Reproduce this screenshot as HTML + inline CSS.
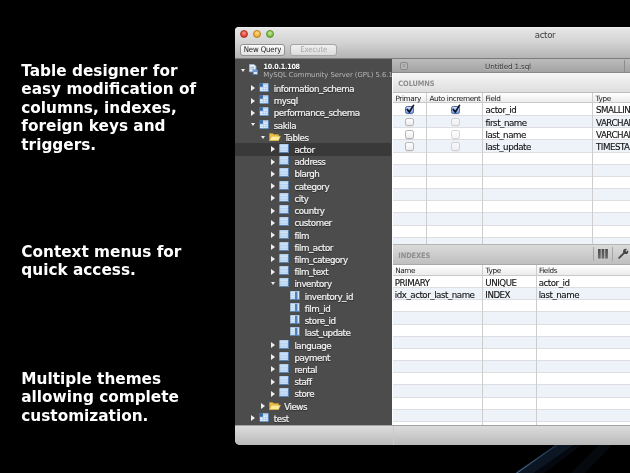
<!DOCTYPE html>
<html>
<head>
<meta charset="utf-8">
<title>Table designer</title>
<style>
html,body{margin:0;padding:0;}
body{width:630px;height:473px;background:#000;position:relative;overflow:hidden;font-family:"DejaVu Sans Condensed","DejaVu Sans","Liberation Sans",sans-serif;}
.abs{position:absolute;}
.promo{position:absolute;left:21.3px;color:#fff;font-family:"DejaVu Sans","Liberation Sans",sans-serif;font-weight:bold;font-size:15.3px;line-height:18.4px;letter-spacing:0;white-space:nowrap;filter:blur(0.3px);}
#glow{position:absolute;left:0;top:0;width:630px;height:473px;}
#win{position:absolute;left:235px;top:26.8px;width:420px;height:418.2px;border-radius:4px 4px 5px 5px;overflow:hidden;background:#fff;filter:blur(0.3px);}
#titlebar{filter:brightness(1.001);position:absolute;z-index:3;left:0;top:0;width:100%;height:32.6px;background:linear-gradient(#f4f4f4 0,#e6e6e6 4%,#d3d3d3 50%,#b4b4b4 100%);border-bottom:1px solid #7c7c7c;box-sizing:border-box;}
.light{position:absolute;top:3px;width:8px;height:8px;border-radius:50%;box-sizing:border-box;}
#title{position:absolute;left:0;width:620px;top:2.2px;text-align:center;font-family:"DejaVu Sans","Liberation Sans",sans-serif;font-size:8.6px;color:#3a3a3a;line-height:12px;letter-spacing:-0.3px;}
.btn{position:absolute;top:17.4px;height:11.6px;border:1px solid #919191;border-radius:3px;box-sizing:border-box;background:linear-gradient(#fdfdfd,#e2e2e2);font-size:7.8px;line-height:9.6px;text-align:center;color:#222;letter-spacing:-0.15px;}
#side{filter:brightness(1.001);position:absolute;left:0;top:32px;width:157px;height:366px;background:#4c4c4c;color:#fff;overflow:hidden;}
.row{position:absolute;left:0;width:156px;height:12.22px;font-family:"DejaVu Sans","Liberation Sans",sans-serif;font-size:8.7px;line-height:12.2px;letter-spacing:-0.45px;white-space:nowrap;text-shadow:0 1px 1px rgba(0,0,0,.55);-webkit-text-stroke:0.22px #f2f2f2;color:#f2f2f2;}
.row .t{position:absolute;top:0.6px;}
.arr{position:absolute;width:0;height:0;}
.ar{border-left:4.4px solid #efefef;border-top:3px solid transparent;border-bottom:3px solid transparent;top:3.1px;}
.ad{border-top:3.9px solid #efefef;border-left:2.8px solid transparent;border-right:2.8px solid transparent;top:4.4px;}
.ico{position:absolute;top:1px;}
#main{position:absolute;left:157px;top:32px;width:264px;height:366px;background:#fff;overflow:hidden;}
#status{position:absolute;left:0;top:398.5px;width:100%;height:19.7px;background:linear-gradient(#dcdcdc,#bababa);border-top:1px solid #a2a2a2;box-sizing:border-box;}
.hdr{position:absolute;left:2px;width:262px;font-size:7.4px;font-weight:bold;color:#8e8e8e;letter-spacing:-0.1px;}
.th{position:absolute;font-family:"DejaVu Sans","Liberation Sans",sans-serif;font-size:7.3px;line-height:10px;color:#222;letter-spacing:-0.38px;white-space:nowrap;}
.td{-webkit-text-stroke:0.12px #111;position:absolute;font-family:"DejaVu Sans","Liberation Sans",sans-serif;font-size:8.7px;line-height:12px;color:#111;letter-spacing:-0.48px;white-space:nowrap;}
.gr{position:absolute;left:1.4px;width:263px;}
.gl{position:absolute;left:1.4px;width:263px;height:0.95px;background:#dedee2;}
.vl{position:absolute;width:1px;background:#cdcdcd;}
.cb{position:absolute;width:8.6px;height:8.6px;border:1px solid #b4b4b4;border-radius:2.2px;background:linear-gradient(#ffffff,#ececec);box-sizing:border-box;box-shadow:0 0.5px 0.5px rgba(0,0,0,.12);}
.cb.on{border-color:#4f6a98;background:linear-gradient(#cfe0f9,#6f9be3);}
</style>
</head>
<body>
<svg id="glow" viewBox="0 0 630 473" style="filter:blur(0.5px)">
  <defs>
    <linearGradient id="g1" x1="0" y1="0" x2="0" y2="1"><stop offset="0" stop-color="#1c2f45"/><stop offset="1" stop-color="#45658a"/></linearGradient>
  </defs>
  <polygon points="556,445 574,445 534,473 516,473" fill="#0c1623"/>
  <polygon points="574,445 582,445 544,473 534,473" fill="#05090f"/>
  <path d="M556.6 445L516.6 473" stroke="url(#g1)" stroke-width="1.3" fill="none"/>
  <polygon points="599,445 612,445 585,473 571,473" fill="#05080d"/>
</svg>

<div class="promo" style="top:62px;">Table designer for<br>easy modification of<br>columns, indexes,<br>foreign keys and<br>triggers.</div>
<div class="promo" style="top:243px;">Context menus for<br>quick access.</div>
<div class="promo" style="top:370px;">Multiple themes<br>allowing complete<br>customization.</div>

<div id="win">
  <div id="titlebar">
    <div class="light" style="left:5px;background:radial-gradient(circle at 50% 35%,#ff9a8e,#e0443a 60%,#b52b23);border:1px solid #a8332c;"></div>
    <div class="light" style="left:18px;background:radial-gradient(circle at 50% 35%,#ffe08a,#f2b13a 60%,#c98a1e);border:1px solid #b78324;"></div>
    <div class="light" style="left:31px;background:radial-gradient(circle at 50% 35%,#c9ef9c,#7fc04a 60%,#55982a);border:1px solid #5c9233;"></div>
    <div id="title">actor</div>
    <div class="btn" style="left:5px;width:45px;">New Query</div>
    <div class="btn" style="left:55.4px;width:46.6px;color:#a8a8a8;border-color:#a5a5a5;background:linear-gradient(#f0f0f0,#dcdcdc);">Execute</div>
  </div>
  <div id="side">
    <div class="arr ad" style="left:5.7px;top:9.8px"></div>
    <svg class="abs" style="left:13.8px;top:5.6px" width="9.2" height="11" viewBox="0 0 10 12"><path d="M0.5 0.5h5l2 2v6h-7z" fill="#eef4fb" stroke="#9db6d6"/><rect x="1.5" y="3" width="4" height="1" fill="#7fa4d8"/><rect x="1.5" y="5" width="4" height="1" fill="#7fa4d8"/><rect x="4.5" y="6.5" width="5" height="5" fill="#dce9f9" stroke="#4f7fc0"/><rect x="5" y="7" width="4" height="1.6" fill="#5b8fd8"/></svg>
    <div class="t abs" style="left:28.5px;top:3.2px;font-size:7.1px;font-weight:bold;line-height:10px;color:#fff;letter-spacing:-0.2px;text-shadow:0 1px 1px rgba(0,0,0,.5);white-space:nowrap">10.0.1.108</div>
    <div class="t abs" style="left:28.3px;top:11.6px;font-family:&quot;DejaVu Sans&quot;,sans-serif;font-size:6.9px;line-height:10px;color:#b9b9b9;letter-spacing:-0.05px;white-space:nowrap">MySQL Community Server (GPL) 5.6.19</div>
    <div class="row" style="top:23.50px"><div class="arr ar" style="left:16.0px"></div><svg class="ico" style="left:24.0px;top:0.6px" width="10" height="9" viewBox="0 0 10 9"><rect x="0.8" y="0.4" width="8.6" height="8.2" fill="#e4f0fb"/><path d="M9.4 0.6v8.1h-8.4" stroke="#4f82bd" stroke-width=".9" fill="none"/><rect x="0.6" y="0.2" width="3.4" height="3.6" fill="#3567a8"/><rect x="4.4" y="0.9" width="4.4" height="1.6" fill="#b5d3f2"/><path d="M4.3 1v7.5M6.8 3v5.5M1 4.6h8M1 6.6h8" stroke="#a4c8ee" stroke-width=".7" fill="none"/></svg><span class="t" style="left:38.8px">information_schema</span></div>
    <div class="row" style="top:35.72px"><div class="arr ar" style="left:16.0px"></div><svg class="ico" style="left:24.0px;top:0.6px" width="10" height="9" viewBox="0 0 10 9"><rect x="0.8" y="0.4" width="8.6" height="8.2" fill="#e4f0fb"/><path d="M9.4 0.6v8.1h-8.4" stroke="#4f82bd" stroke-width=".9" fill="none"/><rect x="0.6" y="0.2" width="3.4" height="3.6" fill="#3567a8"/><rect x="4.4" y="0.9" width="4.4" height="1.6" fill="#b5d3f2"/><path d="M4.3 1v7.5M6.8 3v5.5M1 4.6h8M1 6.6h8" stroke="#a4c8ee" stroke-width=".7" fill="none"/></svg><span class="t" style="left:38.8px">mysql</span></div>
    <div class="row" style="top:47.94px"><div class="arr ar" style="left:16.0px"></div><svg class="ico" style="left:24.0px;top:0.6px" width="10" height="9" viewBox="0 0 10 9"><rect x="0.8" y="0.4" width="8.6" height="8.2" fill="#e4f0fb"/><path d="M9.4 0.6v8.1h-8.4" stroke="#4f82bd" stroke-width=".9" fill="none"/><rect x="0.6" y="0.2" width="3.4" height="3.6" fill="#3567a8"/><rect x="4.4" y="0.9" width="4.4" height="1.6" fill="#b5d3f2"/><path d="M4.3 1v7.5M6.8 3v5.5M1 4.6h8M1 6.6h8" stroke="#a4c8ee" stroke-width=".7" fill="none"/></svg><span class="t" style="left:38.8px">performance_schema</span></div>
    <div class="row" style="top:60.16px"><div class="arr ad" style="left:15.8px"></div><svg class="ico" style="left:24.0px;top:0.6px" width="10" height="9" viewBox="0 0 10 9"><rect x="0.8" y="0.4" width="8.6" height="8.2" fill="#e4f0fb"/><path d="M9.4 0.6v8.1h-8.4" stroke="#4f82bd" stroke-width=".9" fill="none"/><rect x="0.6" y="0.2" width="3.4" height="3.6" fill="#3567a8"/><rect x="4.4" y="0.9" width="4.4" height="1.6" fill="#b5d3f2"/><path d="M4.3 1v7.5M6.8 3v5.5M1 4.6h8M1 6.6h8" stroke="#a4c8ee" stroke-width=".7" fill="none"/></svg><span class="t" style="left:38.8px">sakila</span></div>
    <div class="row" style="top:72.38px"><div class="arr ad" style="left:25.8px"></div><svg class="ico" style="left:33.8px;top:1.6px" width="12" height="8" viewBox="0 0 12 8"><path d="M0.5 0.6h3.4l0.9 1h4.8v5.9h-9.1z" fill="#ecc04a" stroke="#c39a2c" stroke-width=".6"/><path d="M0.6 7.5l2-4.3h8.9l-2 4.3z" fill="#fdeb9c" stroke="#d3a937" stroke-width=".5"/></svg><span class="t" style="left:49.2px">Tables</span></div>
    <div class="row" style="top:84.60px;background:#393939"><div class="arr ar" style="left:36.3px"></div><svg class="ico" style="left:44.3px;top:0.6px" width="10" height="9" viewBox="0 0 10 9"><rect x="0.6" y="0.2" width="9.1" height="8.5" fill="#edf5fd"/><path d="M9.4 0.3v8.1h-8.7" stroke="#3f73ad" stroke-width=".9" fill="none"/><path d="M0.9 8.4v-8h8.2" stroke="#9cc3ea" stroke-width=".6" fill="none"/><rect x="1.1" y="0.6" width="7.8" height="1.3" fill="#bcd8f4"/><path d="M1.1 3.2h7.8M1.1 5h7.8M1.1 6.8h7.8" stroke="#8ebbe8" stroke-width=".85" fill="none"/><path d="M3.8 2v6M6.4 2v6" stroke="#c4dcf5" stroke-width=".5" fill="none"/></svg><span class="t" style="left:59.4px">actor</span></div>
    <div class="row" style="top:96.82px"><div class="arr ar" style="left:36.3px"></div><svg class="ico" style="left:44.3px;top:0.6px" width="10" height="9" viewBox="0 0 10 9"><rect x="0.6" y="0.2" width="9.1" height="8.5" fill="#edf5fd"/><path d="M9.4 0.3v8.1h-8.7" stroke="#3f73ad" stroke-width=".9" fill="none"/><path d="M0.9 8.4v-8h8.2" stroke="#9cc3ea" stroke-width=".6" fill="none"/><rect x="1.1" y="0.6" width="7.8" height="1.3" fill="#bcd8f4"/><path d="M1.1 3.2h7.8M1.1 5h7.8M1.1 6.8h7.8" stroke="#8ebbe8" stroke-width=".85" fill="none"/><path d="M3.8 2v6M6.4 2v6" stroke="#c4dcf5" stroke-width=".5" fill="none"/></svg><span class="t" style="left:59.4px">address</span></div>
    <div class="row" style="top:109.04px"><div class="arr ar" style="left:36.3px"></div><svg class="ico" style="left:44.3px;top:0.6px" width="10" height="9" viewBox="0 0 10 9"><rect x="0.6" y="0.2" width="9.1" height="8.5" fill="#edf5fd"/><path d="M9.4 0.3v8.1h-8.7" stroke="#3f73ad" stroke-width=".9" fill="none"/><path d="M0.9 8.4v-8h8.2" stroke="#9cc3ea" stroke-width=".6" fill="none"/><rect x="1.1" y="0.6" width="7.8" height="1.3" fill="#bcd8f4"/><path d="M1.1 3.2h7.8M1.1 5h7.8M1.1 6.8h7.8" stroke="#8ebbe8" stroke-width=".85" fill="none"/><path d="M3.8 2v6M6.4 2v6" stroke="#c4dcf5" stroke-width=".5" fill="none"/></svg><span class="t" style="left:59.4px">blargh</span></div>
    <div class="row" style="top:121.26px"><div class="arr ar" style="left:36.3px"></div><svg class="ico" style="left:44.3px;top:0.6px" width="10" height="9" viewBox="0 0 10 9"><rect x="0.6" y="0.2" width="9.1" height="8.5" fill="#edf5fd"/><path d="M9.4 0.3v8.1h-8.7" stroke="#3f73ad" stroke-width=".9" fill="none"/><path d="M0.9 8.4v-8h8.2" stroke="#9cc3ea" stroke-width=".6" fill="none"/><rect x="1.1" y="0.6" width="7.8" height="1.3" fill="#bcd8f4"/><path d="M1.1 3.2h7.8M1.1 5h7.8M1.1 6.8h7.8" stroke="#8ebbe8" stroke-width=".85" fill="none"/><path d="M3.8 2v6M6.4 2v6" stroke="#c4dcf5" stroke-width=".5" fill="none"/></svg><span class="t" style="left:59.4px">category</span></div>
    <div class="row" style="top:133.48px"><div class="arr ar" style="left:36.3px"></div><svg class="ico" style="left:44.3px;top:0.6px" width="10" height="9" viewBox="0 0 10 9"><rect x="0.6" y="0.2" width="9.1" height="8.5" fill="#edf5fd"/><path d="M9.4 0.3v8.1h-8.7" stroke="#3f73ad" stroke-width=".9" fill="none"/><path d="M0.9 8.4v-8h8.2" stroke="#9cc3ea" stroke-width=".6" fill="none"/><rect x="1.1" y="0.6" width="7.8" height="1.3" fill="#bcd8f4"/><path d="M1.1 3.2h7.8M1.1 5h7.8M1.1 6.8h7.8" stroke="#8ebbe8" stroke-width=".85" fill="none"/><path d="M3.8 2v6M6.4 2v6" stroke="#c4dcf5" stroke-width=".5" fill="none"/></svg><span class="t" style="left:59.4px">city</span></div>
    <div class="row" style="top:145.70px"><div class="arr ar" style="left:36.3px"></div><svg class="ico" style="left:44.3px;top:0.6px" width="10" height="9" viewBox="0 0 10 9"><rect x="0.6" y="0.2" width="9.1" height="8.5" fill="#edf5fd"/><path d="M9.4 0.3v8.1h-8.7" stroke="#3f73ad" stroke-width=".9" fill="none"/><path d="M0.9 8.4v-8h8.2" stroke="#9cc3ea" stroke-width=".6" fill="none"/><rect x="1.1" y="0.6" width="7.8" height="1.3" fill="#bcd8f4"/><path d="M1.1 3.2h7.8M1.1 5h7.8M1.1 6.8h7.8" stroke="#8ebbe8" stroke-width=".85" fill="none"/><path d="M3.8 2v6M6.4 2v6" stroke="#c4dcf5" stroke-width=".5" fill="none"/></svg><span class="t" style="left:59.4px">country</span></div>
    <div class="row" style="top:157.92px"><div class="arr ar" style="left:36.3px"></div><svg class="ico" style="left:44.3px;top:0.6px" width="10" height="9" viewBox="0 0 10 9"><rect x="0.6" y="0.2" width="9.1" height="8.5" fill="#edf5fd"/><path d="M9.4 0.3v8.1h-8.7" stroke="#3f73ad" stroke-width=".9" fill="none"/><path d="M0.9 8.4v-8h8.2" stroke="#9cc3ea" stroke-width=".6" fill="none"/><rect x="1.1" y="0.6" width="7.8" height="1.3" fill="#bcd8f4"/><path d="M1.1 3.2h7.8M1.1 5h7.8M1.1 6.8h7.8" stroke="#8ebbe8" stroke-width=".85" fill="none"/><path d="M3.8 2v6M6.4 2v6" stroke="#c4dcf5" stroke-width=".5" fill="none"/></svg><span class="t" style="left:59.4px">customer</span></div>
    <div class="row" style="top:170.14px"><div class="arr ar" style="left:36.3px"></div><svg class="ico" style="left:44.3px;top:0.6px" width="10" height="9" viewBox="0 0 10 9"><rect x="0.6" y="0.2" width="9.1" height="8.5" fill="#edf5fd"/><path d="M9.4 0.3v8.1h-8.7" stroke="#3f73ad" stroke-width=".9" fill="none"/><path d="M0.9 8.4v-8h8.2" stroke="#9cc3ea" stroke-width=".6" fill="none"/><rect x="1.1" y="0.6" width="7.8" height="1.3" fill="#bcd8f4"/><path d="M1.1 3.2h7.8M1.1 5h7.8M1.1 6.8h7.8" stroke="#8ebbe8" stroke-width=".85" fill="none"/><path d="M3.8 2v6M6.4 2v6" stroke="#c4dcf5" stroke-width=".5" fill="none"/></svg><span class="t" style="left:59.4px">film</span></div>
    <div class="row" style="top:182.36px"><div class="arr ar" style="left:36.3px"></div><svg class="ico" style="left:44.3px;top:0.6px" width="10" height="9" viewBox="0 0 10 9"><rect x="0.6" y="0.2" width="9.1" height="8.5" fill="#edf5fd"/><path d="M9.4 0.3v8.1h-8.7" stroke="#3f73ad" stroke-width=".9" fill="none"/><path d="M0.9 8.4v-8h8.2" stroke="#9cc3ea" stroke-width=".6" fill="none"/><rect x="1.1" y="0.6" width="7.8" height="1.3" fill="#bcd8f4"/><path d="M1.1 3.2h7.8M1.1 5h7.8M1.1 6.8h7.8" stroke="#8ebbe8" stroke-width=".85" fill="none"/><path d="M3.8 2v6M6.4 2v6" stroke="#c4dcf5" stroke-width=".5" fill="none"/></svg><span class="t" style="left:59.4px">film_actor</span></div>
    <div class="row" style="top:194.58px"><div class="arr ar" style="left:36.3px"></div><svg class="ico" style="left:44.3px;top:0.6px" width="10" height="9" viewBox="0 0 10 9"><rect x="0.6" y="0.2" width="9.1" height="8.5" fill="#edf5fd"/><path d="M9.4 0.3v8.1h-8.7" stroke="#3f73ad" stroke-width=".9" fill="none"/><path d="M0.9 8.4v-8h8.2" stroke="#9cc3ea" stroke-width=".6" fill="none"/><rect x="1.1" y="0.6" width="7.8" height="1.3" fill="#bcd8f4"/><path d="M1.1 3.2h7.8M1.1 5h7.8M1.1 6.8h7.8" stroke="#8ebbe8" stroke-width=".85" fill="none"/><path d="M3.8 2v6M6.4 2v6" stroke="#c4dcf5" stroke-width=".5" fill="none"/></svg><span class="t" style="left:59.4px">film_category</span></div>
    <div class="row" style="top:206.80px"><div class="arr ar" style="left:36.3px"></div><svg class="ico" style="left:44.3px;top:0.6px" width="10" height="9" viewBox="0 0 10 9"><rect x="0.6" y="0.2" width="9.1" height="8.5" fill="#edf5fd"/><path d="M9.4 0.3v8.1h-8.7" stroke="#3f73ad" stroke-width=".9" fill="none"/><path d="M0.9 8.4v-8h8.2" stroke="#9cc3ea" stroke-width=".6" fill="none"/><rect x="1.1" y="0.6" width="7.8" height="1.3" fill="#bcd8f4"/><path d="M1.1 3.2h7.8M1.1 5h7.8M1.1 6.8h7.8" stroke="#8ebbe8" stroke-width=".85" fill="none"/><path d="M3.8 2v6M6.4 2v6" stroke="#c4dcf5" stroke-width=".5" fill="none"/></svg><span class="t" style="left:59.4px">film_text</span></div>
    <div class="row" style="top:219.02px"><div class="arr ad" style="left:36.1px"></div><svg class="ico" style="left:44.3px;top:0.6px" width="10" height="9" viewBox="0 0 10 9"><rect x="0.6" y="0.2" width="9.1" height="8.5" fill="#edf5fd"/><path d="M9.4 0.3v8.1h-8.7" stroke="#3f73ad" stroke-width=".9" fill="none"/><path d="M0.9 8.4v-8h8.2" stroke="#9cc3ea" stroke-width=".6" fill="none"/><rect x="1.1" y="0.6" width="7.8" height="1.3" fill="#bcd8f4"/><path d="M1.1 3.2h7.8M1.1 5h7.8M1.1 6.8h7.8" stroke="#8ebbe8" stroke-width=".85" fill="none"/><path d="M3.8 2v6M6.4 2v6" stroke="#c4dcf5" stroke-width=".5" fill="none"/></svg><span class="t" style="left:59.4px">inventory</span></div>
    <div class="row" style="top:231.24px"><svg class="ico" style="left:55.0px;top:0.6px" width="10" height="9" viewBox="0 0 10 9"><rect x="0.4" y="0.2" width="9.3" height="8.5" fill="#eaf3fc"/><path d="M9.4 0.3v8.1h-8.8" stroke="#3f73ad" stroke-width=".9" fill="none"/><path d="M0.7 8.4v-8h8.4" stroke="#9cc3ea" stroke-width=".6" fill="none"/><rect x="4.9" y="0.8" width="2.6" height="7.2" fill="#4a80c6"/><path d="M1.1 2.7h3.4M1.1 4.5h3.4M1.1 6.3h3.4" stroke="#a9cdef" stroke-width=".7" fill="none"/><path d="M2.8 0.8v7.2" stroke="#b9d6f3" stroke-width=".6"/></svg><span class="t" style="left:69.8px">inventory_id</span></div>
    <div class="row" style="top:243.46px"><svg class="ico" style="left:55.0px;top:0.6px" width="10" height="9" viewBox="0 0 10 9"><rect x="0.4" y="0.2" width="9.3" height="8.5" fill="#eaf3fc"/><path d="M9.4 0.3v8.1h-8.8" stroke="#3f73ad" stroke-width=".9" fill="none"/><path d="M0.7 8.4v-8h8.4" stroke="#9cc3ea" stroke-width=".6" fill="none"/><rect x="4.9" y="0.8" width="2.6" height="7.2" fill="#4a80c6"/><path d="M1.1 2.7h3.4M1.1 4.5h3.4M1.1 6.3h3.4" stroke="#a9cdef" stroke-width=".7" fill="none"/><path d="M2.8 0.8v7.2" stroke="#b9d6f3" stroke-width=".6"/></svg><span class="t" style="left:69.8px">film_id</span></div>
    <div class="row" style="top:255.68px"><svg class="ico" style="left:55.0px;top:0.6px" width="10" height="9" viewBox="0 0 10 9"><rect x="0.4" y="0.2" width="9.3" height="8.5" fill="#eaf3fc"/><path d="M9.4 0.3v8.1h-8.8" stroke="#3f73ad" stroke-width=".9" fill="none"/><path d="M0.7 8.4v-8h8.4" stroke="#9cc3ea" stroke-width=".6" fill="none"/><rect x="4.9" y="0.8" width="2.6" height="7.2" fill="#4a80c6"/><path d="M1.1 2.7h3.4M1.1 4.5h3.4M1.1 6.3h3.4" stroke="#a9cdef" stroke-width=".7" fill="none"/><path d="M2.8 0.8v7.2" stroke="#b9d6f3" stroke-width=".6"/></svg><span class="t" style="left:69.8px">store_id</span></div>
    <div class="row" style="top:267.90px"><svg class="ico" style="left:55.0px;top:0.6px" width="10" height="9" viewBox="0 0 10 9"><rect x="0.4" y="0.2" width="9.3" height="8.5" fill="#eaf3fc"/><path d="M9.4 0.3v8.1h-8.8" stroke="#3f73ad" stroke-width=".9" fill="none"/><path d="M0.7 8.4v-8h8.4" stroke="#9cc3ea" stroke-width=".6" fill="none"/><rect x="4.9" y="0.8" width="2.6" height="7.2" fill="#4a80c6"/><path d="M1.1 2.7h3.4M1.1 4.5h3.4M1.1 6.3h3.4" stroke="#a9cdef" stroke-width=".7" fill="none"/><path d="M2.8 0.8v7.2" stroke="#b9d6f3" stroke-width=".6"/></svg><span class="t" style="left:69.8px">last_update</span></div>
    <div class="row" style="top:280.12px"><div class="arr ar" style="left:36.3px"></div><svg class="ico" style="left:44.3px;top:0.6px" width="10" height="9" viewBox="0 0 10 9"><rect x="0.6" y="0.2" width="9.1" height="8.5" fill="#edf5fd"/><path d="M9.4 0.3v8.1h-8.7" stroke="#3f73ad" stroke-width=".9" fill="none"/><path d="M0.9 8.4v-8h8.2" stroke="#9cc3ea" stroke-width=".6" fill="none"/><rect x="1.1" y="0.6" width="7.8" height="1.3" fill="#bcd8f4"/><path d="M1.1 3.2h7.8M1.1 5h7.8M1.1 6.8h7.8" stroke="#8ebbe8" stroke-width=".85" fill="none"/><path d="M3.8 2v6M6.4 2v6" stroke="#c4dcf5" stroke-width=".5" fill="none"/></svg><span class="t" style="left:59.4px">language</span></div>
    <div class="row" style="top:292.34px"><div class="arr ar" style="left:36.3px"></div><svg class="ico" style="left:44.3px;top:0.6px" width="10" height="9" viewBox="0 0 10 9"><rect x="0.6" y="0.2" width="9.1" height="8.5" fill="#edf5fd"/><path d="M9.4 0.3v8.1h-8.7" stroke="#3f73ad" stroke-width=".9" fill="none"/><path d="M0.9 8.4v-8h8.2" stroke="#9cc3ea" stroke-width=".6" fill="none"/><rect x="1.1" y="0.6" width="7.8" height="1.3" fill="#bcd8f4"/><path d="M1.1 3.2h7.8M1.1 5h7.8M1.1 6.8h7.8" stroke="#8ebbe8" stroke-width=".85" fill="none"/><path d="M3.8 2v6M6.4 2v6" stroke="#c4dcf5" stroke-width=".5" fill="none"/></svg><span class="t" style="left:59.4px">payment</span></div>
    <div class="row" style="top:304.56px"><div class="arr ar" style="left:36.3px"></div><svg class="ico" style="left:44.3px;top:0.6px" width="10" height="9" viewBox="0 0 10 9"><rect x="0.6" y="0.2" width="9.1" height="8.5" fill="#edf5fd"/><path d="M9.4 0.3v8.1h-8.7" stroke="#3f73ad" stroke-width=".9" fill="none"/><path d="M0.9 8.4v-8h8.2" stroke="#9cc3ea" stroke-width=".6" fill="none"/><rect x="1.1" y="0.6" width="7.8" height="1.3" fill="#bcd8f4"/><path d="M1.1 3.2h7.8M1.1 5h7.8M1.1 6.8h7.8" stroke="#8ebbe8" stroke-width=".85" fill="none"/><path d="M3.8 2v6M6.4 2v6" stroke="#c4dcf5" stroke-width=".5" fill="none"/></svg><span class="t" style="left:59.4px">rental</span></div>
    <div class="row" style="top:316.78px"><div class="arr ar" style="left:36.3px"></div><svg class="ico" style="left:44.3px;top:0.6px" width="10" height="9" viewBox="0 0 10 9"><rect x="0.6" y="0.2" width="9.1" height="8.5" fill="#edf5fd"/><path d="M9.4 0.3v8.1h-8.7" stroke="#3f73ad" stroke-width=".9" fill="none"/><path d="M0.9 8.4v-8h8.2" stroke="#9cc3ea" stroke-width=".6" fill="none"/><rect x="1.1" y="0.6" width="7.8" height="1.3" fill="#bcd8f4"/><path d="M1.1 3.2h7.8M1.1 5h7.8M1.1 6.8h7.8" stroke="#8ebbe8" stroke-width=".85" fill="none"/><path d="M3.8 2v6M6.4 2v6" stroke="#c4dcf5" stroke-width=".5" fill="none"/></svg><span class="t" style="left:59.4px">staff</span></div>
    <div class="row" style="top:329.00px"><div class="arr ar" style="left:36.3px"></div><svg class="ico" style="left:44.3px;top:0.6px" width="10" height="9" viewBox="0 0 10 9"><rect x="0.6" y="0.2" width="9.1" height="8.5" fill="#edf5fd"/><path d="M9.4 0.3v8.1h-8.7" stroke="#3f73ad" stroke-width=".9" fill="none"/><path d="M0.9 8.4v-8h8.2" stroke="#9cc3ea" stroke-width=".6" fill="none"/><rect x="1.1" y="0.6" width="7.8" height="1.3" fill="#bcd8f4"/><path d="M1.1 3.2h7.8M1.1 5h7.8M1.1 6.8h7.8" stroke="#8ebbe8" stroke-width=".85" fill="none"/><path d="M3.8 2v6M6.4 2v6" stroke="#c4dcf5" stroke-width=".5" fill="none"/></svg><span class="t" style="left:59.4px">store</span></div>
    <div class="row" style="top:341.22px"><div class="arr ar" style="left:26.0px"></div><svg class="ico" style="left:33.8px;top:1.6px" width="12" height="8" viewBox="0 0 12 8"><path d="M0.5 0.6h3.4l0.9 1h4.8v5.9h-9.1z" fill="#ecc04a" stroke="#c39a2c" stroke-width=".6"/><path d="M0.6 7.5l2-4.3h8.9l-2 4.3z" fill="#fdeb9c" stroke="#d3a937" stroke-width=".5"/></svg><span class="t" style="left:49.2px">Views</span></div>
    <div class="row" style="top:353.44px"><div class="arr ar" style="left:16.0px"></div><svg class="ico" style="left:24.0px;top:0.6px" width="10" height="9" viewBox="0 0 10 9"><rect x="0.8" y="0.4" width="8.6" height="8.2" fill="#e4f0fb"/><path d="M9.4 0.6v8.1h-8.4" stroke="#4f82bd" stroke-width=".9" fill="none"/><rect x="0.6" y="0.2" width="3.4" height="3.6" fill="#3567a8"/><rect x="4.4" y="0.9" width="4.4" height="1.6" fill="#b5d3f2"/><path d="M4.3 1v7.5M6.8 3v5.5M1 4.6h8M1 6.6h8" stroke="#a4c8ee" stroke-width=".7" fill="none"/></svg><span class="t" style="left:38.8px">test</span></div>
  </div>
  <div id="main">
    <div class="abs" style="left:0;top:0;width:263px;height:14px;background:linear-gradient(#bcbcbc,#a3a3a3);border-bottom:1px solid #8a8a8a;box-sizing:border-box"></div>
    <div class="abs" style="left:8.0px;top:3.6px;width:8px;height:8px;border:1px solid #8a8a8a;border-radius:2px;box-sizing:border-box;background:#b8b8b8;font-size:7px;line-height:6px;text-align:center;color:#8a8a8a">×</div>
    <div class="abs" style="left:66.0px;top:3.4px;width:100px;text-align:center;font-family:&quot;DejaVu Sans&quot;,sans-serif;font-size:7.2px;line-height:10px;color:#2e2e2e;letter-spacing:-0.15px;text-shadow:0 1px 0 rgba(255,255,255,.4)">Untitled 1.sql</div>
    <div class="abs" style="left:231.5px;top:1px;width:1px;height:12px;background:#8d8d8d"></div>
    <div class="abs" style="left:1.4px;top:14.0px;width:262px;height:20px;background:linear-gradient(#f6f6f6,#dedede);border-bottom:1px solid #bdbdbd;box-sizing:border-box"></div>
    <div class="hdr" style="left:6.3px;top:20.6px;line-height:10px;">COLUMNS</div>
    <div class="abs" style="left:1.4px;top:34.0px;width:262px;height:10px;background:linear-gradient(#ffffff,#ececec);border-bottom:1px solid #c9c9c9;box-sizing:border-box"></div>
    <div class="th" style="left:3.4px;top:34.9px">Primary</div>
    <div class="th" style="left:37.5px;top:34.9px">Auto increment</div>
    <div class="th" style="left:93.5px;top:34.9px">Field</div>
    <div class="th" style="left:203.5px;top:34.9px">Type</div>
    <div class="gr" style="top:43.90px;height:2px;background:#fff"></div>
    <div class="gr" style="top:45.00px;height:12.18px;background:#ffffff"></div>
    <div class="gl" style="top:56.23px"></div>
    <div class="gr" style="top:57.18px;height:12.18px;background:#eef2f9"></div>
    <div class="gl" style="top:68.41px"></div>
    <div class="gr" style="top:69.36px;height:12.18px;background:#ffffff"></div>
    <div class="gl" style="top:80.59px"></div>
    <div class="gr" style="top:81.54px;height:12.18px;background:#eef2f9"></div>
    <div class="gl" style="top:92.77px"></div>
    <div class="gr" style="top:93.72px;height:12.18px;background:#ffffff"></div>
    <div class="gl" style="top:104.95px"></div>
    <div class="gr" style="top:105.90px;height:12.18px;background:#eef2f9"></div>
    <div class="gl" style="top:117.13px"></div>
    <div class="gr" style="top:118.08px;height:12.18px;background:#ffffff"></div>
    <div class="gl" style="top:129.31px"></div>
    <div class="gr" style="top:130.26px;height:12.18px;background:#eef2f9"></div>
    <div class="gl" style="top:141.49px"></div>
    <div class="gr" style="top:142.44px;height:12.18px;background:#ffffff"></div>
    <div class="gl" style="top:153.67px"></div>
    <div class="gr" style="top:154.62px;height:12.18px;background:#eef2f9"></div>
    <div class="gl" style="top:165.85px"></div>
    <div class="gr" style="top:166.80px;height:12.18px;background:#ffffff"></div>
    <div class="gl" style="top:178.03px"></div>
    <div class="gr" style="top:178.98px;height:6.22px;background:#eef2f9"></div>
    <div class="vl" style="left:33.9px;top:34.0px;height:151.2px"></div>
    <div class="vl" style="left:90.2px;top:34.0px;height:151.2px"></div>
    <div class="vl" style="left:200.1px;top:34.0px;height:151.2px"></div>
    <div class="td" style="left:93.5px;top:45.60px">actor_id</div>
    <div class="td" style="left:204.0px;top:45.60px">SMALLINT</div>
    <div class="cb on" style="left:13.3px;top:46.80px"></div><svg class="abs" style="left:13.3px;top:44.90px" width="11" height="11" viewBox="0 0 11 11"><path d="M2.2 5.4l2.1 2.6l4.2-6.6" stroke="#0d1226" stroke-width="1.7" fill="none" stroke-linecap="round" stroke-linejoin="round"/></svg>
    <div class="cb on" style="left:59.0px;top:46.80px"></div><svg class="abs" style="left:59.0px;top:44.90px" width="11" height="11" viewBox="0 0 11 11"><path d="M2.2 5.4l2.1 2.6l4.2-6.6" stroke="#0d1226" stroke-width="1.7" fill="none" stroke-linecap="round" stroke-linejoin="round"/></svg>
    <div class="td" style="left:93.5px;top:57.78px">first_name</div>
    <div class="td" style="left:204.0px;top:57.78px">VARCHAR</div>
    <div class="cb" style="left:13.3px;top:59.08px;"></div>
    <div class="cb" style="left:59.0px;top:59.08px;opacity:.55"></div>
    <div class="td" style="left:93.5px;top:69.96px">last_name</div>
    <div class="td" style="left:204.0px;top:69.96px">VARCHAR</div>
    <div class="cb" style="left:13.3px;top:71.26px;"></div>
    <div class="cb" style="left:59.0px;top:71.26px;opacity:.55"></div>
    <div class="td" style="left:93.5px;top:82.14px">last_update</div>
    <div class="td" style="left:204.0px;top:82.14px">TIMESTAMP</div>
    <div class="cb" style="left:13.3px;top:83.44px;"></div>
    <div class="cb" style="left:59.0px;top:83.44px;opacity:.55"></div>
    <div class="abs" style="left:1.4px;top:185.2px;width:262px;height:20.8px;background:linear-gradient(#dadada,#bfbfbf);border-top:1px solid #b5b5b5;border-bottom:1px solid #a9a9a9;box-sizing:border-box"></div>
    <div class="hdr" style="left:6.3px;top:191.9px;line-height:10px;">INDEXES</div>
    <div class="abs" style="left:201.0px;top:188.5px;width:1px;height:14px;background:#a5a5a5"></div>
    <div class="abs" style="left:220.0px;top:188.5px;width:1px;height:14px;background:#a5a5a5"></div>
    <svg class="abs" style="left:206.1px;top:190.3px" width="10" height="9.6" viewBox="0 0 10 9.6"><defs><linearGradient id="cg" x1="0" y1="0" x2="0" y2="1"><stop offset="0" stop-color="#4a4a4a"/><stop offset="1" stop-color="#6e6e6e"/></linearGradient></defs><rect x="0" y="0" width="2.7" height="9.6" fill="url(#cg)"/><rect x="3.6" y="0" width="2.7" height="9.6" fill="url(#cg)"/><rect x="7.2" y="0" width="2.7" height="9.6" fill="url(#cg)"/></svg>
    <svg class="abs" style="left:226.3px;top:189.7px" width="11.5" height="11.5" viewBox="0 0 12 12"><path d="M1.2 10.3l5-5" stroke="#454545" stroke-width="1.9" stroke-linecap="round"/><circle cx="8" cy="3.6" r="2.7" fill="#454545"/><path d="M8.2 3.4l3-3" stroke="#d0d0d0" stroke-width="1.5"/></svg>
    <div class="abs" style="left:1.4px;top:206.0px;width:262px;height:11px;background:linear-gradient(#ffffff,#ececec);border-bottom:1px solid #c9c9c9;box-sizing:border-box"></div>
    <div class="th" style="left:3.2px;top:207.2px">Name</div>
    <div class="th" style="left:93.5px;top:207.2px">Type</div>
    <div class="th" style="left:146.9px;top:207.2px">Fields</div>
    <div class="gr" style="top:217.00px;height:12.18px;background:#ffffff"></div>
    <div class="gl" style="top:228.23px"></div>
    <div class="gr" style="top:229.18px;height:12.18px;background:#eef2f9"></div>
    <div class="gl" style="top:240.41px"></div>
    <div class="gr" style="top:241.36px;height:12.18px;background:#ffffff"></div>
    <div class="gl" style="top:252.59px"></div>
    <div class="gr" style="top:253.54px;height:12.18px;background:#eef2f9"></div>
    <div class="gl" style="top:264.77px"></div>
    <div class="gr" style="top:265.72px;height:12.18px;background:#ffffff"></div>
    <div class="gl" style="top:276.95px"></div>
    <div class="gr" style="top:277.90px;height:12.18px;background:#eef2f9"></div>
    <div class="gl" style="top:289.13px"></div>
    <div class="gr" style="top:290.08px;height:12.18px;background:#ffffff"></div>
    <div class="gl" style="top:301.31px"></div>
    <div class="gr" style="top:302.26px;height:12.18px;background:#eef2f9"></div>
    <div class="gl" style="top:313.49px"></div>
    <div class="gr" style="top:314.44px;height:12.18px;background:#ffffff"></div>
    <div class="gl" style="top:325.67px"></div>
    <div class="gr" style="top:326.62px;height:12.18px;background:#eef2f9"></div>
    <div class="gl" style="top:337.85px"></div>
    <div class="gr" style="top:338.80px;height:12.18px;background:#ffffff"></div>
    <div class="gl" style="top:350.03px"></div>
    <div class="gr" style="top:350.98px;height:12.18px;background:#eef2f9"></div>
    <div class="gl" style="top:362.21px"></div>
    <div class="gr" style="top:363.16px;height:3.34px;background:#ffffff"></div>
    <div class="vl" style="left:90.4px;top:206.0px;height:160.5px"></div>
    <div class="vl" style="left:144.3px;top:206.0px;height:160.5px"></div>
    <div class="td" style="left:2.8px;top:218.00px">PRIMARY</div>
    <div class="td" style="left:93.3px;top:218.00px">UNIQUE</div>
    <div class="td" style="left:146.7px;top:218.00px">actor_id</div>
    <div class="td" style="left:2.8px;top:230.18px">idx_actor_last_name</div>
    <div class="td" style="left:93.3px;top:230.18px">INDEX</div>
    <div class="td" style="left:146.7px;top:230.18px">last_name</div>
  </div>
  <div id="status"><div class="abs" style="left:158px;top:0;width:1px;height:20px;background:#c9c9c9;"></div></div>
</div>
</body>
</html>
